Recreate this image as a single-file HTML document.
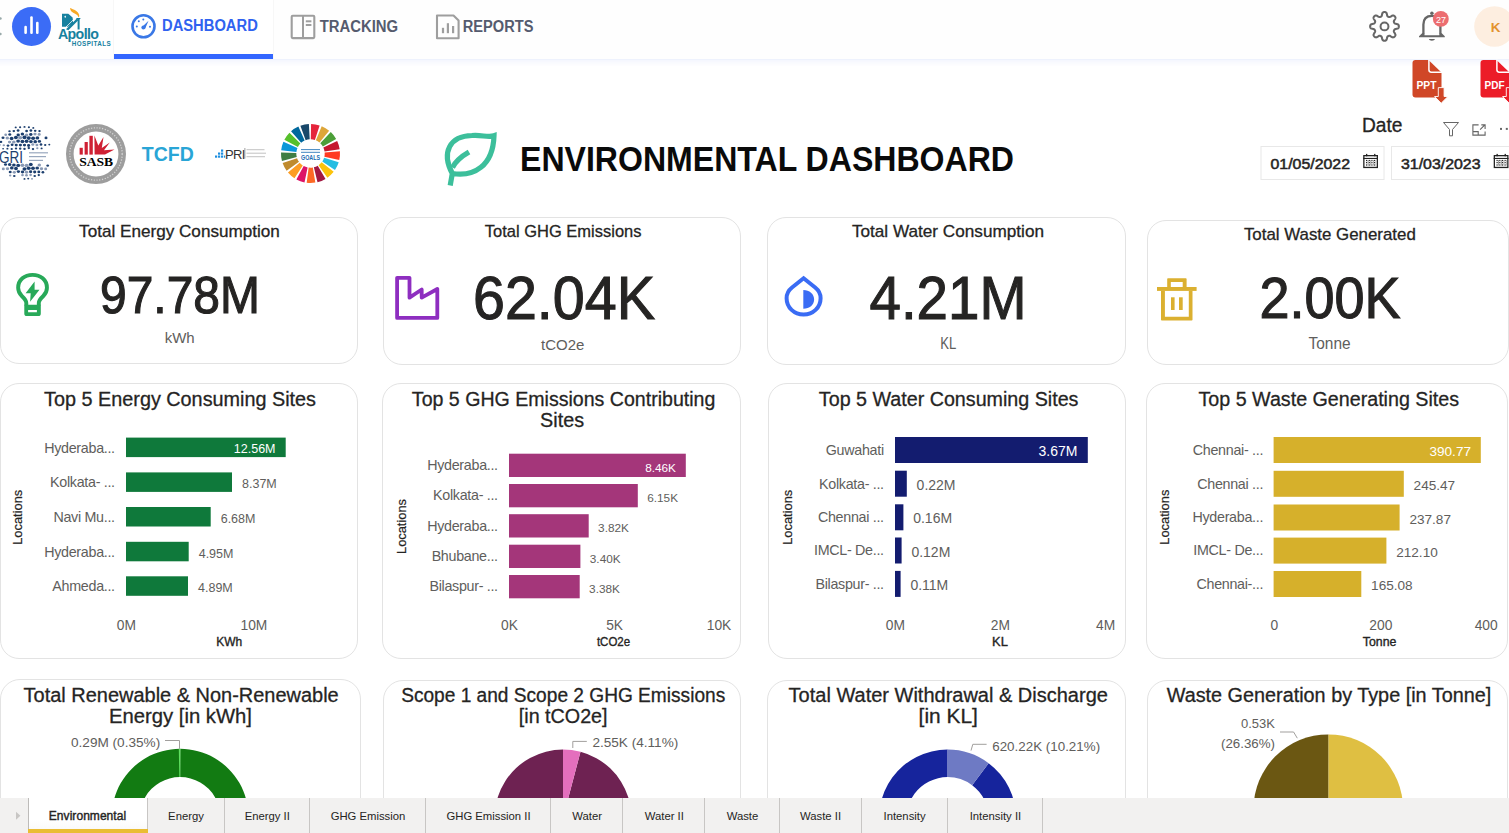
<!DOCTYPE html>
<html><head><meta charset="utf-8">
<style>
*{box-sizing:border-box;margin:0;padding:0}
html,body{width:1509px;height:833px;overflow:hidden;background:#fff;font-family:"Liberation Sans",sans-serif;position:relative}
.a{position:absolute}
.nw{white-space:nowrap}
.card{position:absolute;border:1px solid #e3e3e3;border-radius:19px;background:#fff}
.ttl{position:absolute;white-space:nowrap;color:#252423;font-size:15.5px;letter-spacing:0.8px;text-align:center}
.ctitle{position:absolute;white-space:nowrap;color:#252423;font-size:19px;letter-spacing:0.6px;text-align:center;line-height:21px}
.big{position:absolute;white-space:nowrap;color:#252423;font-size:52px;letter-spacing:0px;line-height:52px}
.unit{position:absolute;white-space:nowrap;color:#605e5c;font-size:15px}
.lbl{position:absolute;white-space:nowrap;color:#605e5c;font-size:13px;text-align:right}
.val{position:absolute;white-space:nowrap;color:#605e5c;font-size:13px}
.bar{position:absolute}
.tick{position:absolute;white-space:nowrap;color:#605e5c;font-size:13px}
.axt{position:absolute;white-space:nowrap;color:#252423;font-size:12px;font-weight:700}
.loc{position:absolute;white-space:nowrap;color:#252423;font-size:12.5px;font-weight:700;transform:rotate(-90deg);transform-origin:center center;letter-spacing:0.3px}
.tab{position:absolute;top:797px;height:36px;border-right:1px solid #c8c6c4;font-size:12px;color:#252423;text-align:center;line-height:38px;white-space:nowrap}
</style></head>
<body>
<!-- HEADER -->
<div class="a" style="left:0;top:0;width:1509px;height:59px;background:#fefefe"></div>
<div class="a" style="left:0;top:59px;width:1509px;height:1px;background:#eef2fd"></div><div class="a" style="left:0;top:60px;width:1509px;height:1px;background:#f5f7fe"></div><div class="a" style="left:0;top:61px;width:1509px;height:1px;background:#f7f8fe"></div><div class="a" style="left:0;top:62px;width:1509px;height:1px;background:#f9fafe"></div><div class="a" style="left:0;top:63px;width:1509px;height:1px;background:#fafbfe"></div><div class="a" style="left:0;top:64px;width:1509px;height:1px;background:#fcfcfe"></div><div class="a" style="left:0;top:65px;width:1509px;height:1px;background:#fdfdff"></div>
<div class="a" style="left:113px;top:0;width:161px;height:59px;background:#fff;border-left:1px solid #f7f7f7;border-right:1px solid #f7f7f7"></div>
<div class="a" style="left:114px;top:54px;width:159px;height:5px;background:#3366ff"></div>


<svg class="a" style="left:0;top:0" width="1509" height="110" viewBox="0 0 1509 110">
  <!-- left tiny dots -->
  <circle cx="0.5" cy="18.5" r="1.2" fill="#9aa"/>
  <circle cx="0.5" cy="34" r="1.2" fill="#9aa"/>
  <circle cx="31.5" cy="26.5" r="19.5" fill="#3b6cf6"/>
  <rect x="24.3" y="25.8" width="2.6" height="8.2" rx="1.2" fill="#fff"/>
  <rect x="30.2" y="16.3" width="2.6" height="17.7" rx="1.2" fill="#fff"/>
  <rect x="36" y="21.8" width="2.6" height="12.2" rx="1.2" fill="#fff"/>
  <!-- apollo logo -->
  <path d="M62 13.8 L68.3 13.8 L72.6 17.6 L73.2 23.2 L68 26.8 L62 26.8 Z" fill="#17819f"/>
  <path d="M64.3 16.8 L65.2 15.6 L66.1 16.8 L65.2 18 Z" fill="#fff"/>
  <path d="M66 29.2 L76.8 18.6 L78.6 20 L68.3 30.2 Z" fill="#17819f"/>
  <path d="M65 28 L73.6 19.5" stroke="#fff" stroke-width="0.8"/>
  <path d="M75.9 18 L80.8 18 L79.6 19.6 L79.6 29.6 L77.6 29.6 L77.6 19.6 Z" fill="#17819f"/>
  <path d="M70 8 C73.5 9.5 78.5 11 79.2 15.2 C79.5 16.5 78.8 17.2 78.3 17.3 C78.4 14.5 74 13.8 71.5 11.5 C70.6 10.6 70.2 9.2 70 8 Z" fill="#f7a823"/>
  <text x="58" y="38.7" font-family="Liberation Sans" font-size="14.2" font-weight="700" fill="#17819f" letter-spacing="-0.65">Apollo</text>
  <text x="71.8" y="45.9" font-family="Liberation Sans" font-size="6.3" font-weight="700" fill="#17819f" letter-spacing="0.42">HOSPITALS</text>
  <!-- gauge icon -->
  <circle cx="143.5" cy="26.3" r="11" fill="none" stroke="#3a78e6" stroke-width="2.6"/>
  <path d="M141.6 27.6 L148.5 20.8 L145 29 Z" fill="#3a78e6"/>
  <circle cx="143.3" cy="27.5" r="1.9" fill="#3a78e6"/>
  <circle cx="136.8" cy="26.5" r="1" fill="#3a78e6"/>
  <circle cx="138.8" cy="21.3" r="1" fill="#3a78e6"/>
  <circle cx="143.3" cy="19.4" r="1" fill="#3a78e6"/>
  <circle cx="150" cy="26.8" r="1" fill="#3a78e6"/>
  <!-- tracking icon -->
  <rect x="291.7" y="15.8" width="22.6" height="22.3" rx="1" fill="none" stroke="#9e9e9e" stroke-width="2.1"/>
  <line x1="303" y1="15.8" x2="303" y2="38" stroke="#9e9e9e" stroke-width="2"/>
  <rect x="305.8" y="20.3" width="5.6" height="2" fill="#9e9e9e"/>
  <rect x="305.8" y="24" width="5.6" height="2" fill="#9e9e9e"/>
  <!-- reports icon -->
  <path d="M437 15.5 L453.5 15.5 L458.6 20.6 L458.6 38.3 L437 38.3 Z" fill="none" stroke="#9e9e9e" stroke-width="2.1" stroke-linejoin="round"/>
  <rect x="441.9" y="27.8" width="2.2" height="5.4" fill="#9e9e9e"/>
  <rect x="446.8" y="23.2" width="2.2" height="10" fill="#9e9e9e"/>
  <rect x="452" y="26" width="2.2" height="7.2" fill="#9e9e9e"/>
  <!-- gear -->
  <path d="M1384.50 12.05 L1384.73 12.06 L1384.95 12.07 L1385.17 12.11 L1385.40 12.16 L1385.62 12.23 L1385.83 12.33 L1386.04 12.46 L1386.24 12.65 L1386.42 12.90 L1386.59 13.22 L1386.73 13.61 L1386.85 14.06 L1386.96 14.52 L1387.06 14.96 L1387.15 15.36 L1387.25 15.68 L1387.36 15.94 L1387.48 16.14 L1387.61 16.30 L1387.74 16.43 L1387.88 16.53 L1388.02 16.62 L1388.16 16.70 L1388.31 16.77 L1388.46 16.84 L1388.61 16.90 L1388.77 16.95 L1388.92 17.00 L1389.09 17.04 L1389.26 17.06 L1389.44 17.06 L1389.64 17.04 L1389.87 16.98 L1390.13 16.88 L1390.43 16.72 L1390.78 16.51 L1391.16 16.26 L1391.56 16.01 L1391.96 15.78 L1392.34 15.61 L1392.69 15.50 L1392.99 15.45 L1393.27 15.46 L1393.51 15.51 L1393.73 15.59 L1393.94 15.69 L1394.13 15.82 L1394.31 15.95 L1394.48 16.10 L1394.65 16.25 L1394.80 16.42 L1394.95 16.59 L1395.08 16.77 L1395.21 16.96 L1395.31 17.17 L1395.39 17.39 L1395.44 17.63 L1395.45 17.91 L1395.40 18.21 L1395.29 18.56 L1395.12 18.94 L1394.89 19.34 L1394.64 19.74 L1394.39 20.12 L1394.18 20.47 L1394.02 20.77 L1393.92 21.03 L1393.86 21.26 L1393.84 21.46 L1393.84 21.64 L1393.86 21.81 L1393.90 21.98 L1393.95 22.13 L1394.00 22.29 L1394.06 22.44 L1394.13 22.59 L1394.20 22.74 L1394.28 22.88 L1394.37 23.02 L1394.47 23.16 L1394.60 23.29 L1394.76 23.42 L1394.96 23.54 L1395.22 23.65 L1395.54 23.75 L1395.94 23.84 L1396.38 23.94 L1396.84 24.05 L1397.29 24.17 L1397.68 24.31 L1398.00 24.48 L1398.25 24.66 L1398.44 24.86 L1398.57 25.07 L1398.67 25.28 L1398.74 25.50 L1398.79 25.73 L1398.83 25.95 L1398.84 26.17 L1398.85 26.40 L1398.84 26.63 L1398.83 26.85 L1398.79 27.07 L1398.74 27.30 L1398.67 27.52 L1398.57 27.73 L1398.44 27.94 L1398.25 28.14 L1398.00 28.32 L1397.68 28.49 L1397.29 28.63 L1396.84 28.75 L1396.38 28.86 L1395.94 28.96 L1395.54 29.05 L1395.22 29.15 L1394.96 29.26 L1394.76 29.38 L1394.60 29.51 L1394.47 29.64 L1394.37 29.78 L1394.28 29.92 L1394.20 30.06 L1394.13 30.21 L1394.06 30.36 L1394.00 30.51 L1393.95 30.67 L1393.90 30.82 L1393.86 30.99 L1393.84 31.16 L1393.84 31.34 L1393.86 31.54 L1393.92 31.77 L1394.02 32.03 L1394.18 32.33 L1394.39 32.68 L1394.64 33.06 L1394.89 33.46 L1395.12 33.86 L1395.29 34.24 L1395.40 34.59 L1395.45 34.89 L1395.44 35.17 L1395.39 35.41 L1395.31 35.63 L1395.21 35.84 L1395.08 36.03 L1394.95 36.21 L1394.80 36.38 L1394.65 36.55 L1394.48 36.70 L1394.31 36.85 L1394.13 36.98 L1393.94 37.11 L1393.73 37.21 L1393.51 37.29 L1393.27 37.34 L1392.99 37.35 L1392.69 37.30 L1392.34 37.19 L1391.96 37.02 L1391.56 36.79 L1391.16 36.54 L1390.78 36.29 L1390.43 36.08 L1390.13 35.92 L1389.87 35.82 L1389.64 35.76 L1389.44 35.74 L1389.26 35.74 L1389.09 35.76 L1388.92 35.80 L1388.77 35.85 L1388.61 35.90 L1388.46 35.96 L1388.31 36.03 L1388.16 36.10 L1388.02 36.18 L1387.88 36.27 L1387.74 36.37 L1387.61 36.50 L1387.48 36.66 L1387.36 36.86 L1387.25 37.12 L1387.15 37.44 L1387.06 37.84 L1386.96 38.28 L1386.85 38.74 L1386.73 39.19 L1386.59 39.58 L1386.42 39.90 L1386.24 40.15 L1386.04 40.34 L1385.83 40.47 L1385.62 40.57 L1385.40 40.64 L1385.17 40.69 L1384.95 40.73 L1384.73 40.74 L1384.50 40.75 L1384.27 40.74 L1384.05 40.73 L1383.83 40.69 L1383.60 40.64 L1383.38 40.57 L1383.17 40.47 L1382.96 40.34 L1382.76 40.15 L1382.58 39.90 L1382.41 39.58 L1382.27 39.19 L1382.15 38.74 L1382.04 38.28 L1381.94 37.84 L1381.85 37.44 L1381.75 37.12 L1381.64 36.86 L1381.52 36.66 L1381.39 36.50 L1381.26 36.37 L1381.12 36.27 L1380.98 36.18 L1380.84 36.10 L1380.69 36.03 L1380.54 35.96 L1380.39 35.90 L1380.23 35.85 L1380.08 35.80 L1379.91 35.76 L1379.74 35.74 L1379.56 35.74 L1379.36 35.76 L1379.13 35.82 L1378.87 35.92 L1378.57 36.08 L1378.22 36.29 L1377.84 36.54 L1377.44 36.79 L1377.04 37.02 L1376.66 37.19 L1376.31 37.30 L1376.01 37.35 L1375.73 37.34 L1375.49 37.29 L1375.27 37.21 L1375.06 37.11 L1374.87 36.98 L1374.69 36.85 L1374.52 36.70 L1374.35 36.55 L1374.20 36.38 L1374.05 36.21 L1373.92 36.03 L1373.79 35.84 L1373.69 35.63 L1373.61 35.41 L1373.56 35.17 L1373.55 34.89 L1373.60 34.59 L1373.71 34.24 L1373.88 33.86 L1374.11 33.46 L1374.36 33.06 L1374.61 32.68 L1374.82 32.33 L1374.98 32.03 L1375.08 31.77 L1375.14 31.54 L1375.16 31.34 L1375.16 31.16 L1375.14 30.99 L1375.10 30.82 L1375.05 30.67 L1375.00 30.51 L1374.94 30.36 L1374.87 30.21 L1374.80 30.06 L1374.72 29.92 L1374.63 29.78 L1374.53 29.64 L1374.40 29.51 L1374.24 29.38 L1374.04 29.26 L1373.78 29.15 L1373.46 29.05 L1373.06 28.96 L1372.62 28.86 L1372.16 28.75 L1371.71 28.63 L1371.32 28.49 L1371.00 28.32 L1370.75 28.14 L1370.56 27.94 L1370.43 27.73 L1370.33 27.52 L1370.26 27.30 L1370.21 27.07 L1370.17 26.85 L1370.16 26.63 L1370.15 26.40 L1370.16 26.17 L1370.17 25.95 L1370.21 25.73 L1370.26 25.50 L1370.33 25.28 L1370.43 25.07 L1370.56 24.86 L1370.75 24.66 L1371.00 24.48 L1371.32 24.31 L1371.71 24.17 L1372.16 24.05 L1372.62 23.94 L1373.06 23.84 L1373.46 23.75 L1373.78 23.65 L1374.04 23.54 L1374.24 23.42 L1374.40 23.29 L1374.53 23.16 L1374.63 23.02 L1374.72 22.88 L1374.80 22.74 L1374.87 22.59 L1374.94 22.44 L1375.00 22.29 L1375.05 22.13 L1375.10 21.98 L1375.14 21.81 L1375.16 21.64 L1375.16 21.46 L1375.14 21.26 L1375.08 21.03 L1374.98 20.77 L1374.82 20.47 L1374.61 20.12 L1374.36 19.74 L1374.11 19.34 L1373.88 18.94 L1373.71 18.56 L1373.60 18.21 L1373.55 17.91 L1373.56 17.63 L1373.61 17.39 L1373.69 17.17 L1373.79 16.96 L1373.92 16.77 L1374.05 16.59 L1374.20 16.42 L1374.35 16.25 L1374.52 16.10 L1374.69 15.95 L1374.87 15.82 L1375.06 15.69 L1375.27 15.59 L1375.49 15.51 L1375.73 15.46 L1376.01 15.45 L1376.31 15.50 L1376.66 15.61 L1377.04 15.78 L1377.44 16.01 L1377.84 16.26 L1378.22 16.51 L1378.57 16.72 L1378.87 16.88 L1379.13 16.98 L1379.36 17.04 L1379.56 17.06 L1379.74 17.06 L1379.91 17.04 L1380.08 17.00 L1380.23 16.95 L1380.39 16.90 L1380.54 16.84 L1380.69 16.77 L1380.84 16.70 L1380.98 16.62 L1381.12 16.53 L1381.26 16.43 L1381.39 16.30 L1381.52 16.14 L1381.64 15.94 L1381.75 15.68 L1381.85 15.36 L1381.94 14.96 L1382.04 14.52 L1382.15 14.06 L1382.27 13.61 L1382.41 13.22 L1382.58 12.90 L1382.76 12.65 L1382.96 12.46 L1383.17 12.33 L1383.38 12.23 L1383.60 12.16 L1383.83 12.11 L1384.05 12.07 L1384.27 12.06 Z" fill="none" stroke="#666" stroke-width="2.05"/>
  <circle cx="1384.5" cy="26.4" r="3.95" fill="none" stroke="#666" stroke-width="2"/>
  <!-- bell -->
  <path d="M1423.4 33.5 L1423.4 24.5 C1423.4 19 1426.5 15.8 1431.9 15.8 C1437.3 15.8 1440.4 19 1440.4 24.5 L1440.4 33.5" fill="none" stroke="#666" stroke-width="2.3"/>
  <path d="M1422.3 33 L1424.5 33 L1424.5 35.2 L1439.3 35.2 L1439.3 33 L1441.5 33 L1444.8 36.2 L1444.8 37.3 L1419 37.3 L1419 36.2 Z" fill="#666"/>
  <circle cx="1431.9" cy="13.2" r="1.75" fill="#666"/>
  <path d="M1428.9 39.1 L1434.9 39.1 C1434.6 41.2 1429.2 41.2 1428.9 39.1 Z" fill="#666"/>
  <circle cx="1440.8" cy="18.9" r="7.95" fill="#ec6d70"/>
  <text x="1441" y="22.6" text-anchor="middle" font-family="Liberation Sans" font-size="9.6" fill="#fff" textLength="10" lengthAdjust="spacingAndGlyphs">27</text>
  <!-- avatar -->
  <circle cx="1494.5" cy="26.5" r="20.3" fill="#fdeee0"/>
  <text x="1495.5" y="32" text-anchor="middle" font-family="Liberation Sans" font-size="13.5" font-weight="700" fill="#e3922f">K</text>
  <!-- PPT -->
  <path d="M1415.5 60 L1428.5 60 L1441.5 72.5 L1441.5 95 Q1441.5 97.5 1439 97.5 L1415.5 97.5 Q1412.5 97.5 1412.5 94.5 L1412.5 63 Q1412.5 60 1415.5 60 Z" fill="#d04727"/>
  <path d="M1428.9 59.5 L1428.9 69.8 Q1428.9 72.2 1431.3 72.2 L1442 72.2" fill="none" stroke="#fff" stroke-width="1.5"/>
  <text x="1426.5" y="89.3" text-anchor="middle" font-family="Liberation Sans" font-size="10.8" font-weight="700" fill="#fff" textLength="20" lengthAdjust="spacingAndGlyphs">PPT</text>
  <path d="M1438.3 87.6 L1444.1 87.6 L1444.1 96.5 L1447.9 96.5 L1441.2 103.2 L1434.6 96.5 L1438.3 96.5 Z" fill="#d04727" stroke="#fff" stroke-width="0.9"/>
  <!-- PDF -->
  <path d="M1483.5 60 L1496.5 60 L1509.5 72.5 L1509.5 97.5 L1483.5 97.5 Q1480.5 97.5 1480.5 94.5 L1480.5 63 Q1480.5 60 1483.5 60 Z" fill="#ec1c28"/>
  <path d="M1496.9 59.5 L1496.9 69.8 Q1496.9 72.2 1499.3 72.2 L1510 72.2" fill="none" stroke="#fff" stroke-width="1.5"/>
  <text x="1494.5" y="89.3" text-anchor="middle" font-family="Liberation Sans" font-size="10.8" font-weight="700" fill="#fff" textLength="20" lengthAdjust="spacingAndGlyphs">PDF</text>
  <path d="M1506.3 87.6 L1512.1 87.6 L1512.1 96.5 L1515.9 96.5 L1509.2 103.2 L1502.6 96.5 L1506.3 96.5 Z" fill="#ec1c28" stroke="#fff" stroke-width="0.9"/>
</svg>
<svg class="a" style="left:0;top:0" width="600" height="50" font-family="Liberation Sans" font-weight="700" font-size="15.8">
  <text x="162" y="31.2" fill="#2f62f0" textLength="95.8" lengthAdjust="spacingAndGlyphs">DASHBOARD</text>
  <text x="319.7" y="31.9" fill="#555b6e" textLength="78.4" lengthAdjust="spacingAndGlyphs">TRACKING</text>
  <text x="462.8" y="31.9" fill="#555b6e" textLength="70.6" lengthAdjust="spacingAndGlyphs">REPORTS</text>
</svg>

<svg class="a" style="left:0;top:110px" width="1509" height="90" viewBox="0 110 1509 90">
  <ellipse cx="15.7" cy="127.4" rx="1.03" ry="0.90" fill="#1d3f6e"/><ellipse cx="20.1" cy="127.3" rx="1.07" ry="0.93" fill="#1d3f6e"/><ellipse cx="24.5" cy="126.9" rx="1.08" ry="0.94" fill="#1d3f6e"/><ellipse cx="28.9" cy="127.2" rx="1.07" ry="0.93" fill="#1d3f6e"/><ellipse cx="33.3" cy="127.9" rx="1.03" ry="0.90" fill="#1d3f6e"/><ellipse cx="9.5" cy="131.2" rx="1.23" ry="1.07" fill="#1d3f6e"/><ellipse cx="13.8" cy="131.1" rx="1.32" ry="1.15" fill="#1d3f6e"/><ellipse cx="18.1" cy="130.5" rx="1.38" ry="1.20" fill="#1d3f6e"/><ellipse cx="26.6" cy="131.0" rx="1.41" ry="1.23" fill="#1d3f6e"/><ellipse cx="30.9" cy="130.5" rx="1.38" ry="1.20" fill="#1d3f6e"/><ellipse cx="35.2" cy="130.8" rx="1.32" ry="1.15" fill="#1d3f6e"/><ellipse cx="39.5" cy="131.1" rx="1.23" ry="1.07" fill="#1d3f6e"/><ellipse cx="5.7" cy="134.7" rx="1.38" ry="1.20" fill="#8a9ab5"/><ellipse cx="9.8" cy="134.5" rx="1.53" ry="1.33" fill="#1d3f6e"/><ellipse cx="18.2" cy="134.9" rx="1.71" ry="1.49" fill="#1d3f6e"/><ellipse cx="22.4" cy="134.0" rx="1.75" ry="1.52" fill="#1d3f6e"/><ellipse cx="26.6" cy="135.0" rx="1.75" ry="1.52" fill="#8a9ab5"/><ellipse cx="30.8" cy="134.6" rx="1.71" ry="1.49" fill="#1d3f6e"/><ellipse cx="35.0" cy="134.1" rx="1.64" ry="1.43" fill="#8a9ab5"/><ellipse cx="39.2" cy="134.4" rx="1.53" ry="1.33" fill="#8a9ab5"/><ellipse cx="3.0" cy="137.8" rx="1.51" ry="1.31" fill="#1d3f6e"/><ellipse cx="7.3" cy="138.1" rx="1.72" ry="1.50" fill="#8a9ab5"/><ellipse cx="11.6" cy="138.5" rx="1.88" ry="1.64" fill="#1d3f6e"/><ellipse cx="15.9" cy="137.5" rx="2.00" ry="1.74" fill="#1d3f6e"/><ellipse cx="20.2" cy="137.7" rx="2.07" ry="1.80" fill="#8a9ab5"/><ellipse cx="24.5" cy="137.4" rx="2.09" ry="1.82" fill="#1d3f6e"/><ellipse cx="28.8" cy="138.1" rx="2.07" ry="1.80" fill="#1d3f6e"/><ellipse cx="33.1" cy="138.3" rx="2.00" ry="1.74" fill="#1d3f6e"/><ellipse cx="37.4" cy="137.9" rx="1.88" ry="1.64" fill="#1d3f6e"/><ellipse cx="46.0" cy="137.9" rx="1.51" ry="1.31" fill="#1d3f6e"/><ellipse cx="1.0" cy="141.9" rx="1.31" ry="1.14" fill="#1d3f6e"/><ellipse cx="9.6" cy="142.1" rx="1.69" ry="1.47" fill="#8a9ab5"/><ellipse cx="13.8" cy="142.0" rx="1.81" ry="1.58" fill="#8a9ab5"/><ellipse cx="18.1" cy="141.1" rx="1.90" ry="1.65" fill="#1d3f6e"/><ellipse cx="22.4" cy="141.5" rx="1.94" ry="1.69" fill="#1d3f6e"/><ellipse cx="26.6" cy="141.2" rx="1.94" ry="1.69" fill="#1d3f6e"/><ellipse cx="30.9" cy="141.6" rx="1.90" ry="1.65" fill="#1d3f6e"/><ellipse cx="35.2" cy="141.7" rx="1.81" ry="1.58" fill="#1d3f6e"/><ellipse cx="39.4" cy="141.4" rx="1.69" ry="1.47" fill="#1d3f6e"/><ellipse cx="-0.3" cy="144.9" rx="1.02" ry="0.89" fill="#8a9ab5"/><ellipse cx="3.8" cy="145.2" rx="1.20" ry="1.04" fill="#8a9ab5"/><ellipse cx="8.0" cy="145.6" rx="1.35" ry="1.17" fill="#1d3f6e"/><ellipse cx="12.1" cy="144.8" rx="1.46" ry="1.27" fill="#1d3f6e"/><ellipse cx="16.2" cy="145.1" rx="1.54" ry="1.34" fill="#1d3f6e"/><ellipse cx="20.4" cy="145.1" rx="1.59" ry="1.39" fill="#1d3f6e"/><ellipse cx="24.5" cy="145.1" rx="1.61" ry="1.40" fill="#1d3f6e"/><ellipse cx="28.6" cy="145.5" rx="1.59" ry="1.39" fill="#1d3f6e"/><ellipse cx="32.8" cy="144.5" rx="1.54" ry="1.34" fill="#8a9ab5"/><ellipse cx="36.9" cy="145.0" rx="1.46" ry="1.27" fill="#8a9ab5"/><ellipse cx="41.0" cy="144.5" rx="1.35" ry="1.17" fill="#1d3f6e"/><ellipse cx="45.2" cy="145.0" rx="1.20" ry="1.04" fill="#1d3f6e"/><ellipse cx="49.3" cy="144.6" rx="1.02" ry="0.89" fill="#1d3f6e"/><ellipse cx="3.1" cy="148.8" rx="0.93" ry="0.81" fill="#1d3f6e"/><ellipse cx="7.4" cy="148.7" rx="1.05" ry="0.92" fill="#1d3f6e"/><ellipse cx="11.7" cy="149.0" rx="1.15" ry="1.00" fill="#1d3f6e"/><ellipse cx="16.0" cy="148.5" rx="1.22" ry="1.06" fill="#1d3f6e"/><ellipse cx="20.2" cy="148.7" rx="1.26" ry="1.10" fill="#1d3f6e"/><ellipse cx="24.5" cy="148.9" rx="1.27" ry="1.11" fill="#1d3f6e"/><ellipse cx="28.8" cy="148.1" rx="1.26" ry="1.10" fill="#1d3f6e"/><ellipse cx="33.0" cy="149.1" rx="1.22" ry="1.06" fill="#1d3f6e"/><ellipse cx="37.3" cy="148.2" rx="1.15" ry="1.00" fill="#8a9ab5"/><ellipse cx="41.6" cy="148.4" rx="1.05" ry="0.92" fill="#1d3f6e"/><ellipse cx="5.5" cy="164.5" rx="1.56" ry="1.36" fill="#1d3f6e"/><ellipse cx="9.7" cy="164.6" rx="1.73" ry="1.51" fill="#1d3f6e"/><ellipse cx="13.9" cy="165.0" rx="1.86" ry="1.62" fill="#1d3f6e"/><ellipse cx="18.2" cy="165.4" rx="1.95" ry="1.69" fill="#1d3f6e"/><ellipse cx="22.4" cy="165.3" rx="1.99" ry="1.73" fill="#8a9ab5"/><ellipse cx="26.6" cy="165.5" rx="1.99" ry="1.73" fill="#8a9ab5"/><ellipse cx="30.8" cy="164.5" rx="1.95" ry="1.69" fill="#1d3f6e"/><ellipse cx="39.3" cy="164.9" rx="1.73" ry="1.51" fill="#8a9ab5"/><ellipse cx="47.7" cy="165.6" rx="1.35" ry="1.18" fill="#1d3f6e"/><ellipse cx="3.3" cy="168.9" rx="1.49" ry="1.30" fill="#8a9ab5"/><ellipse cx="7.5" cy="168.7" rx="1.69" ry="1.47" fill="#8a9ab5"/><ellipse cx="11.8" cy="167.9" rx="1.84" ry="1.60" fill="#1d3f6e"/><ellipse cx="16.0" cy="168.5" rx="1.95" ry="1.70" fill="#1d3f6e"/><ellipse cx="24.5" cy="168.9" rx="2.04" ry="1.77" fill="#1d3f6e"/><ellipse cx="28.7" cy="168.2" rx="2.02" ry="1.76" fill="#1d3f6e"/><ellipse cx="33.0" cy="168.2" rx="1.95" ry="1.70" fill="#1d3f6e"/><ellipse cx="37.2" cy="168.0" rx="1.84" ry="1.60" fill="#1d3f6e"/><ellipse cx="41.5" cy="168.7" rx="1.69" ry="1.47" fill="#8a9ab5"/><ellipse cx="45.7" cy="168.9" rx="1.49" ry="1.30" fill="#8a9ab5"/><ellipse cx="10.2" cy="172.0" rx="1.50" ry="1.30" fill="#1d3f6e"/><ellipse cx="14.3" cy="172.3" rx="1.60" ry="1.39" fill="#8a9ab5"/><ellipse cx="18.4" cy="171.6" rx="1.67" ry="1.45" fill="#1d3f6e"/><ellipse cx="22.5" cy="172.1" rx="1.70" ry="1.48" fill="#1d3f6e"/><ellipse cx="26.5" cy="172.3" rx="1.70" ry="1.48" fill="#8a9ab5"/><ellipse cx="30.6" cy="171.7" rx="1.67" ry="1.45" fill="#1d3f6e"/><ellipse cx="34.7" cy="172.0" rx="1.60" ry="1.39" fill="#1d3f6e"/><ellipse cx="38.8" cy="171.9" rx="1.50" ry="1.30" fill="#1d3f6e"/><ellipse cx="42.9" cy="172.2" rx="1.36" ry="1.19" fill="#1d3f6e"/><ellipse cx="10.2" cy="175.5" rx="1.20" ry="1.05" fill="#8a9ab5"/><ellipse cx="14.3" cy="176.0" rx="1.29" ry="1.12" fill="#1d3f6e"/><ellipse cx="22.5" cy="175.1" rx="1.37" ry="1.19" fill="#8a9ab5"/><ellipse cx="26.5" cy="175.3" rx="1.37" ry="1.19" fill="#8a9ab5"/><ellipse cx="30.6" cy="175.0" rx="1.34" ry="1.16" fill="#8a9ab5"/><ellipse cx="34.7" cy="176.0" rx="1.29" ry="1.12" fill="#1d3f6e"/><ellipse cx="38.8" cy="175.1" rx="1.20" ry="1.05" fill="#1d3f6e"/><ellipse cx="24.5" cy="178.9" rx="1.03" ry="0.90" fill="#1d3f6e"/><ellipse cx="28.2" cy="178.6" rx="1.03" ry="0.89" fill="#1d3f6e"/><ellipse cx="32.0" cy="178.8" rx="1.00" ry="0.87" fill="#8a9ab5"/>
  <text x="-1" y="162.5" font-family="Liberation Sans" font-size="16.5" fill="#1d3f6e" textLength="24" lengthAdjust="spacingAndGlyphs">GRI</text>
  <rect x="29" y="152.2" width="19" height="1.2" fill="#1d3f6e" opacity="0.45"/>
  <rect x="29" y="156" width="17" height="1.2" fill="#1d3f6e" opacity="0.45"/>
  <rect x="29" y="159.8" width="14" height="1.2" fill="#1d3f6e" opacity="0.45"/>
  <!-- SASB -->
  <circle cx="96" cy="154" r="26.2" fill="#fff" stroke="#9d9d9d" stroke-width="7.6"/>
  <circle cx="96" cy="154" r="26.2" fill="none" stroke="#fff" stroke-width="1.3" stroke-dasharray="1.2 1.6" opacity="0.55"/>
  <g fill="#cf2033">
    <rect x="79.6" y="147.8" width="3.2" height="6.8"/>
    <rect x="84.6" y="142" width="3.2" height="12.6"/>
    <rect x="89.4" y="135.8" width="3.4" height="18.8"/>
    <path d="M94.6 154.6 L94.4 135.6 L98.3 145.5 L103.5 137 L101.8 148 L109.8 142.5 L104 150.2 L114.5 149.5 L105 154.6 Z"/>
  </g>
  <text x="96.2" y="165.6" text-anchor="middle" font-family="Liberation Serif" font-size="12.5" font-weight="700" fill="#000" textLength="34" lengthAdjust="spacingAndGlyphs">SASB</text>
  <!-- TCFD -->
  <text x="141.8" y="160.6" font-family="Liberation Sans" font-size="21" font-weight="700" fill="#29a5d6" textLength="52" lengthAdjust="spacingAndGlyphs">TCFD</text>
  <!-- PRI -->
  <g fill="#1e8fe0">
    <rect x="215" y="155.5" width="2.2" height="2.2"/>
    <rect x="218" y="155.5" width="2.2" height="2.2"/><rect x="218" y="152.5" width="2.2" height="2.2"/>
    <rect x="221" y="155.5" width="2.2" height="2.2"/><rect x="221" y="152.5" width="2.2" height="2.2"/><rect x="221" y="149.5" width="2.2" height="2.2"/>
    <rect x="224" y="155.5" width="1.2" height="2.2"/>
  </g>
  <text x="225" y="158.5" font-family="Liberation Sans" font-size="13" fill="#333" letter-spacing="-0.6">PRI</text>
  <rect x="244.5" y="148" width="0.8" height="10.5" fill="#888"/>
  <rect x="246.5" y="149.2" width="18" height="1" fill="#888" opacity="0.5"/>
  <rect x="246.5" y="152.7" width="19.5" height="1" fill="#888" opacity="0.5"/>
  <rect x="246.5" y="156.2" width="18.5" height="1" fill="#888" opacity="0.5"/>
  <!-- SDG -->
  <path d="M310.78 139.30 L311.09 124.01 A29.5 29.5 0 0 1 319.63 125.45 L314.89 140.00 A14.2 14.2 0 0 0 310.78 139.30 Z" fill="#E5243B"/><path d="M315.89 140.36 L321.70 126.21 A29.5 29.5 0 0 1 329.15 130.64 L319.48 142.50 A14.2 14.2 0 0 0 315.89 140.36 Z" fill="#DDA63A"/><path d="M320.27 143.20 L330.81 132.10 A29.5 29.5 0 0 1 336.14 138.92 L322.84 146.48 A14.2 14.2 0 0 0 320.27 143.20 Z" fill="#4C9F38"/><path d="M323.34 147.43 L337.17 140.88 A29.5 29.5 0 0 1 339.68 149.17 L324.55 151.41 A14.2 14.2 0 0 0 323.34 147.43 Z" fill="#C5192D"/><path d="M324.66 152.47 L339.92 151.37 A29.5 29.5 0 0 1 339.27 160.00 L324.35 156.63 A14.2 14.2 0 0 0 324.66 152.47 Z" fill="#FF3A21"/><path d="M324.08 157.66 L338.71 162.14 A29.5 29.5 0 0 1 334.98 169.96 L322.29 161.42 A14.2 14.2 0 0 0 324.08 157.66 Z" fill="#26BDE2"/><path d="M321.66 162.28 L333.68 171.74 A29.5 29.5 0 0 1 327.39 177.69 L318.63 165.14 A14.2 14.2 0 0 0 321.66 162.28 Z" fill="#FCC30B"/><path d="M317.73 165.72 L325.53 178.89 A29.5 29.5 0 0 1 317.51 182.16 L313.87 167.29 A14.2 14.2 0 0 0 317.73 165.72 Z" fill="#A21942"/><path d="M312.83 167.51 L315.34 182.60 A29.5 29.5 0 0 1 306.68 182.75 L308.66 167.58 A14.2 14.2 0 0 0 312.83 167.51 Z" fill="#FD6925"/><path d="M307.61 167.40 L304.50 182.38 A29.5 29.5 0 0 1 296.37 179.40 L303.70 165.97 A14.2 14.2 0 0 0 307.61 167.40 Z" fill="#DD1367"/><path d="M302.78 165.42 L294.47 178.27 A29.5 29.5 0 0 1 287.97 172.54 L299.66 162.67 A14.2 14.2 0 0 0 302.78 165.42 Z" fill="#FD9D24"/><path d="M299.00 161.83 L286.61 170.80 A29.5 29.5 0 0 1 282.61 163.12 L297.08 158.13 A14.2 14.2 0 0 0 299.00 161.83 Z" fill="#BF8B2E"/><path d="M296.77 157.11 L281.97 161.00 A29.5 29.5 0 0 1 281.02 152.40 L296.31 152.97 A14.2 14.2 0 0 0 296.77 157.11 Z" fill="#3F7E44"/><path d="M296.39 151.91 L281.19 150.19 A29.5 29.5 0 0 1 283.41 141.82 L297.46 147.88 A14.2 14.2 0 0 0 296.39 151.91 Z" fill="#0A97D9"/><path d="M297.92 146.92 L284.36 139.83 A29.5 29.5 0 0 1 289.46 132.82 L300.37 143.55 A14.2 14.2 0 0 0 297.92 146.92 Z" fill="#56C02B"/><path d="M301.15 142.82 L291.07 131.31 A29.5 29.5 0 0 1 298.35 126.62 L304.65 140.56 A14.2 14.2 0 0 0 301.15 142.82 Z" fill="#00689D"/><path d="M305.64 140.16 L300.40 125.78 A29.5 29.5 0 0 1 308.88 124.04 L309.72 139.32 A14.2 14.2 0 0 0 305.64 140.16 Z" fill="#19486A"/>
  <rect x="301" y="149" width="19" height="1.1" fill="#1a6db3" opacity="0.75"/>
  <rect x="301" y="151.8" width="19" height="1.1" fill="#1a6db3" opacity="0.75"/>
  <text x="310.5" y="159.6" text-anchor="middle" font-family="Liberation Sans" font-size="6.8" font-weight="700" fill="#1a6db3" textLength="19" lengthAdjust="spacingAndGlyphs">GOALS</text>
  <!-- leaf -->
  <g fill="none" stroke="#3cbf9b" stroke-width="5.2" stroke-linecap="butt" stroke-linejoin="miter" stroke-miterlimit="6">
    <path d="M450.2 185.5 L452.3 173.5 C 474 177, 493 166, 494 135.8 C 488 138, 481 134.4, 472 135.5 C 450 136, 441 152, 452.3 173.5"/>
    <path d="M452.5 167.5 C 456 160.5, 462 156, 469 152"/>
  </g>
  <!-- date slicer icons -->
  <path d="M1443.5 122.5 L1458.5 122.5 L1452.5 129.5 L1452.5 135.8 L1449.5 135.8 L1449.5 129.5 Z" fill="none" stroke="#666" stroke-width="1"/>
  <path d="M1478.6 124.9 L1472.9 124.9 L1472.9 135.1 L1485.1 135.1 L1485.1 131.4 M1481.3 124.9 L1485.1 124.9 L1485.1 128.9 M1472.9 131.6 L1478.2 131.6 L1478.2 135.1 M1480.1 129.7 L1485.1 124.7" fill="none" stroke="#666" stroke-width="1.1"/>
  <rect x="1500" y="127.9" width="2" height="2" fill="#666"/><rect x="1505.8" y="127.9" width="2" height="2" fill="#666"/>
  <!-- date boxes -->
  <rect x="1261" y="146.5" width="123" height="33" fill="#fff" stroke="#e8e8e8" stroke-width="1"/>
  <rect x="1391.5" y="146.5" width="130" height="33" fill="#fff" stroke="#e8e8e8" stroke-width="1"/>
  <rect x="1363.85" y="155.65" width="13.5" height="11.8" fill="none" stroke="#222" stroke-width="1.3"/><rect x="1363.20" y="157.9" width="14.8" height="1.1" fill="#222"/><rect x="1366.00" y="153.9" width="1.3" height="2.4" fill="#222"/><rect x="1374.10" y="153.9" width="1.3" height="2.4" fill="#222"/><rect x="1366.00" y="159.90" width="1.2" height="1.2" fill="#222"/><rect x="1368.70" y="159.90" width="1.2" height="1.2" fill="#222"/><rect x="1371.30" y="159.90" width="1.2" height="1.2" fill="#222"/><rect x="1374.00" y="159.90" width="1.2" height="1.2" fill="#222"/><rect x="1366.00" y="162.00" width="1.2" height="1.2" fill="#222"/><rect x="1368.70" y="162.00" width="1.2" height="1.2" fill="#222"/><rect x="1371.30" y="162.00" width="1.2" height="1.2" fill="#222"/><rect x="1374.00" y="162.00" width="1.2" height="1.2" fill="#222"/><rect x="1366.00" y="164.40" width="1.2" height="1.2" fill="#222"/><rect x="1368.70" y="164.40" width="1.2" height="1.2" fill="#222"/><rect x="1371.30" y="164.40" width="1.2" height="1.2" fill="#222"/><rect x="1374.00" y="164.40" width="1.2" height="1.2" fill="#222"/><rect x="1367.60" y="160" width="1" height="5.6" fill="#999"/><rect x="1370.30" y="160" width="1" height="5.6" fill="#999"/><rect x="1372.90" y="160" width="1" height="5.6" fill="#aaa"/><rect x="1375.50" y="160" width="1" height="5.6" fill="#bbb"/>
  <rect x="1494.35" y="155.65" width="13.5" height="11.8" fill="none" stroke="#222" stroke-width="1.3"/><rect x="1493.70" y="157.9" width="14.8" height="1.1" fill="#222"/><rect x="1496.50" y="153.9" width="1.3" height="2.4" fill="#222"/><rect x="1504.60" y="153.9" width="1.3" height="2.4" fill="#222"/><rect x="1496.50" y="159.90" width="1.2" height="1.2" fill="#222"/><rect x="1499.20" y="159.90" width="1.2" height="1.2" fill="#222"/><rect x="1501.80" y="159.90" width="1.2" height="1.2" fill="#222"/><rect x="1504.50" y="159.90" width="1.2" height="1.2" fill="#222"/><rect x="1496.50" y="162.00" width="1.2" height="1.2" fill="#222"/><rect x="1499.20" y="162.00" width="1.2" height="1.2" fill="#222"/><rect x="1501.80" y="162.00" width="1.2" height="1.2" fill="#222"/><rect x="1504.50" y="162.00" width="1.2" height="1.2" fill="#222"/><rect x="1496.50" y="164.40" width="1.2" height="1.2" fill="#222"/><rect x="1499.20" y="164.40" width="1.2" height="1.2" fill="#222"/><rect x="1501.80" y="164.40" width="1.2" height="1.2" fill="#222"/><rect x="1504.50" y="164.40" width="1.2" height="1.2" fill="#222"/><rect x="1498.10" y="160" width="1" height="5.6" fill="#999"/><rect x="1500.80" y="160" width="1" height="5.6" fill="#999"/><rect x="1503.40" y="160" width="1" height="5.6" fill="#aaa"/><rect x="1506.00" y="160" width="1" height="5.6" fill="#bbb"/>
</svg>
<svg class="a" style="left:500px;top:110px" width="1009" height="80" viewBox="500 110 1009 80" font-family="Liberation Sans">
  <text x="520" y="170.9" font-size="35" font-weight="700" fill="#0a0a0a" textLength="494" lengthAdjust="spacingAndGlyphs">ENVIRONMENTAL DASHBOARD</text>
  <text x="1362" y="132.3" font-size="19.5" fill="#252423" stroke="#252423" stroke-width="0.3" textLength="40.5" lengthAdjust="spacingAndGlyphs">Date</text>
  <text x="1270.5" y="169.2" font-size="14.5" fill="#252423" stroke="#252423" stroke-width="0.5" textLength="79.5" lengthAdjust="spacingAndGlyphs">01/05/2022</text>
  <text x="1401" y="169.2" font-size="14.5" fill="#252423" stroke="#252423" stroke-width="0.5" textLength="79.5" lengthAdjust="spacingAndGlyphs">31/03/2023</text>
</svg>

<!-- KPI CARDS -->
<div class="card" style="left:0px;top:217px;width:358px;height:147px"></div>
<div class="card" style="left:383px;top:217px;width:358px;height:148px"></div>
<div class="card" style="left:767px;top:217px;width:359px;height:148px"></div>
<div class="card" style="left:1147px;top:220px;width:362px;height:145px"></div>
<svg class="a" style="left:0;top:210px" width="1509" height="150" viewBox="0 210 1509 150" font-family="Liberation Sans">
  <g fill="#252423" stroke="#252423" stroke-width="0.35" font-size="16.2" letter-spacing="0.42">
  </g>
  <g fill="#252423" stroke="#252423" stroke-width="1.1">
    <text x="100" y="312.8" font-size="52.3" textLength="160" lengthAdjust="spacingAndGlyphs">97.78M</text>
    <text x="473" y="318.6" font-size="61.5" textLength="182" lengthAdjust="spacingAndGlyphs">62.04K</text>
    <text x="869.5" y="318.5" font-size="61.5" textLength="157" lengthAdjust="spacingAndGlyphs">4.21M</text>
    <text x="1259.5" y="318.4" font-size="57.5" textLength="141" lengthAdjust="spacingAndGlyphs">2.00K</text>
  </g>
  <g fill="#605e5c" font-size="15" text-anchor="middle">
    <text x="179.7" y="342.7">kWh</text>
    <text x="562.8" y="349.6">tCO2e</text>
    <text x="948.2" y="349.1" font-size="16" textLength="16" lengthAdjust="spacingAndGlyphs">KL</text>
    <text x="1329.6" y="349.1" font-size="16" textLength="42" lengthAdjust="spacingAndGlyphs">Tonne</text>
  </g>
  <!-- bulb -->
  <path d="M26.3 305.5 L26.3 303 C26.3 300.3 24.3 298.3 21.8 296 C19.3 293.6 18.15 290.8 18.15 287.8 C18.15 279.6 24.6 274.85 32.55 274.85 C40.5 274.85 46.95 279.6 46.95 287.8 C46.95 290.8 45.8 293.6 43.3 296 C40.8 298.3 38.8 300.3 38.8 303 L38.8 305.5" fill="none" stroke="#28a959" stroke-width="3.9" stroke-linejoin="round"/>
  <path fill-rule="evenodd" d="M24.3 304.8 L40.8 304.8 L40.8 313.5 Q40.8 316.1 38.2 316.1 L26.9 316.1 Q24.3 316.1 24.3 313.5 Z M28.1 309.9 L36.9 309.9 L36.9 312.2 L28.1 312.2 Z" fill="#28a959"/>
  <path d="M34.6 281.6 L25.6 293.3 L30.7 293.3 L30.1 301.7 L39.5 289.7 L34.6 289.7 Z" fill="#28a959"/>
  <!-- factory -->
  <path d="M397.1 277.8 L409.5 277.8 L409.5 297.7 L421.7 289.5 L421.7 297.6 L437.3 289 L437.3 317.9 L397.1 317.9 Z" fill="none" stroke="#8e2ec0" stroke-width="3.8" stroke-linejoin="round"/>
  <!-- drop -->
  <path d="M803.6 278.2 L815.2 287.5 C819 290.5 820.6 294 820.6 298.2 C820.6 307.5 813 314.5 803.6 314.5 C794.2 314.5 786.6 307.5 786.6 298.2 C786.6 294 788.2 290.5 792 287.5 Z" fill="none" stroke="#3a6cf4" stroke-width="4" stroke-linejoin="miter"/>
  <path d="M803.3 290 C809.5 290 814.1 294 814.1 299.4 C814.1 304.7 809.5 308.7 803.3 308.7 Z" fill="#3a6cf4"/>
  <!-- trash -->
  <g fill="#dbb030">
    <rect x="1157" y="287" width="39.6" height="3.9"/>
    <path d="M1167.2 287 L1167.2 279 Q1167.2 278.2 1168 278.2 L1185.8 278.2 Q1186.6 278.2 1186.6 279 L1186.6 287 L1182.7 287 L1182.7 282 L1170.8 282 L1170.8 287 Z"/>
    <path d="M1161 290.8 L1164.9 290.8 L1164.9 316.7 L1188.8 316.7 L1188.8 290.8 L1192.5 290.8 L1192.5 319.8 Q1192.5 320.6 1191.7 320.6 L1161.8 320.6 Q1161 320.6 1161 319.8 Z"/>
    <rect x="1171" y="297.3" width="3.6" height="12.7"/>
    <rect x="1179" y="297.3" width="3.7" height="12.7"/>
  </g>
</svg>



<!-- ROW3 -->
<div class="card" style="left:0px;top:679px;width:361px;height:200px;border-radius:20px"></div>
<div class="card" style="left:383px;top:680px;width:358px;height:200px;border-radius:20px"></div>
<div class="card" style="left:767px;top:680px;width:359px;height:200px;border-radius:20px"></div>
<div class="card" style="left:1147px;top:680px;width:361px;height:200px;border-radius:20px"></div>
<svg class="a" style="left:0;top:670px" width="1509" height="163" viewBox="0 670 1509 163" font-family="Liberation Sans">
<path d="M180.24 748.80 A68.5 68.5 0 1 1 180.00 748.80 L180.00 777.00 A40.3 40.3 0 1 0 180.14 777.00 Z" fill="#127b12"/>
<path d="M178.80 748.81 A68.5 68.5 0 0 1 180.31 748.80 L180.18 777.00 A40.3 40.3 0 0 0 179.30 777.01 Z" fill="#5fe05f"/>
<path d="M563 818 L580.50 751.77 A68.5 68.5 0 1 1 563.00 749.50 Z" fill="#6e2252"/>
<path d="M563 818 L563.00 749.50 A68.5 68.5 0 0 1 580.50 751.77 Z" fill="#e46fbd"/>
<path d="M988.63 763.15 A68.5 68.5 0 1 1 947.60 749.50 L947.60 777.00 A41 41 0 1 0 972.16 785.17 Z" fill="#16249c"/>
<path d="M947.60 749.50 A68.5 68.5 0 0 1 988.63 763.15 L972.16 785.17 A41 41 0 0 0 947.60 777.00 Z" fill="#6e7ac4"/>
<path d="M1328.3 809.2 L1328.30 734.40 A74.8 74.8 0 0 1 1328.30 884.00 Z" fill="#dfbf42"/>
<path d="M1328.3 809.2 L1328.30 884.00 A74.8 74.8 0 0 1 1328.30 734.40 Z" fill="#6b5712"/>
<g fill="#252423" stroke="#252423" stroke-width="0.35" font-size="19" text-anchor="middle">
</g>
<g fill="#605e5c">
  <text x="71" y="746.8" font-size="13.6">0.29M (0.35%)</text>
  <text x="592.4" y="746.5" font-size="13.6">2.55K (4.11%)</text>
  <text x="992.2" y="751" font-size="13.4">620.22K (10.21%)</text>
  <text x="1275" y="728.2" font-size="13" text-anchor="end">0.53K</text>
  <text x="1275" y="748" font-size="13.3" text-anchor="end">(26.36%)</text>
</g>
<g fill="none" stroke="#a19f9d" stroke-width="1">
  <path d="M165 740.5 L179.5 740.5 L179.5 748.8"/>
  <path d="M586.8 741.4 L572.8 741.4 L572.8 748"/>
  <path d="M986.6 744.3 L972.8 744.3 L971 750.6"/>
  <path d="M1280 732 L1293.6 732 L1297.3 738.2"/>
</g>
</svg>
<div class="a" style="left:0;top:797.5px;width:1509px;height:36px;background:#f2f1f0"></div>
<svg class="a" style="left:0;top:797px" width="30" height="36"><path d="M16 14.8 L20.4 18.8 L16 22.8 Z" fill="#c8c6c4"/></svg>
<div class="a" style="left:27.5px;top:797.5px;width:120.0px;height:36px;background:linear-gradient(#fff 60%,#f7f7f7);border-left:1px solid #bdbbb9;border-right:1px solid #c8c6c4"></div>
<div class="a" style="left:27.5px;top:829px;width:120.0px;height:4px;background:#eabd33"></div>
<div class="a nw" style="left:27.5px;top:809px;width:120.0px;text-align:center;font-size:12px;line-height:14px;font-weight:400;-webkit-text-stroke:0.4px #252423;color:#252423;letter-spacing:0.05px">Environmental</div>
<div class="a" style="left:223.5px;top:797.5px;width:1px;height:36px;background:#c8c6c4"></div>
<div class="a nw" style="left:147.5px;top:809px;width:77.0px;text-align:center;font-size:11.3px;line-height:14px;color:#252423">Energy</div>
<div class="a" style="left:309px;top:797.5px;width:1px;height:36px;background:#c8c6c4"></div>
<div class="a nw" style="left:224.5px;top:809px;width:85.5px;text-align:center;font-size:11.3px;line-height:14px;color:#252423">Energy II</div>
<div class="a" style="left:425px;top:797.5px;width:1px;height:36px;background:#c8c6c4"></div>
<div class="a nw" style="left:310px;top:809px;width:116px;text-align:center;font-size:11.3px;line-height:14px;color:#252423">GHG Emission</div>
<div class="a" style="left:550px;top:797.5px;width:1px;height:36px;background:#c8c6c4"></div>
<div class="a nw" style="left:426px;top:809px;width:125px;text-align:center;font-size:11.3px;line-height:14px;color:#252423">GHG Emission II</div>
<div class="a" style="left:622.3px;top:797.5px;width:1px;height:36px;background:#c8c6c4"></div>
<div class="a nw" style="left:551px;top:809px;width:72.29999999999995px;text-align:center;font-size:11.3px;line-height:14px;color:#252423">Water</div>
<div class="a" style="left:704.4px;top:797.5px;width:1px;height:36px;background:#c8c6c4"></div>
<div class="a nw" style="left:623.3px;top:809px;width:82.10000000000002px;text-align:center;font-size:11.3px;line-height:14px;color:#252423">Water II</div>
<div class="a" style="left:778.6px;top:797.5px;width:1px;height:36px;background:#c8c6c4"></div>
<div class="a nw" style="left:705.4px;top:809px;width:74.20000000000005px;text-align:center;font-size:11.3px;line-height:14px;color:#252423">Waste</div>
<div class="a" style="left:860.5px;top:797.5px;width:1px;height:36px;background:#c8c6c4"></div>
<div class="a nw" style="left:779.6px;top:809px;width:81.89999999999998px;text-align:center;font-size:11.3px;line-height:14px;color:#252423">Waste II</div>
<div class="a" style="left:946.6px;top:797.5px;width:1px;height:36px;background:#c8c6c4"></div>
<div class="a nw" style="left:861.5px;top:809px;width:86.10000000000002px;text-align:center;font-size:11.3px;line-height:14px;color:#252423">Intensity</div>
<div class="a" style="left:1042.3px;top:797.5px;width:1px;height:36px;background:#c8c6c4"></div>
<div class="a nw" style="left:947.6px;top:809px;width:95.69999999999993px;text-align:center;font-size:11.3px;line-height:14px;color:#252423">Intensity II</div>
<!-- /ROW3 -->




<!-- BAR CARDS -->
<div class="card" style="left:0px;top:383px;width:358px;height:276px"></div>
<div class="card" style="left:382px;top:383px;width:359px;height:276px"></div>
<div class="card" style="left:768px;top:383px;width:358px;height:276px"></div>
<div class="card" style="left:1146px;top:383px;width:362px;height:276px"></div>
<svg class="a" style="left:0;top:375px" width="1509" height="290" viewBox="0 375 1509 290" font-family="Liberation Sans">
<rect x="126" y="437.6" width="159.7" height="19.5" fill="#0f793b"/>
<text x="114.8" y="452.7" text-anchor="end" fill="#605e5c" font-size="14.3" letter-spacing="-0.3">Hyderaba...</text>
<text x="275.5" y="453.4" text-anchor="end" fill="#fff" font-size="12.5">12.56M</text>
<rect x="126" y="472.4" width="106" height="19.5" fill="#0f793b"/>
<text x="114.8" y="487.4" text-anchor="end" fill="#605e5c" font-size="14.3" letter-spacing="-0.3">Kolkata- ...</text>
<text x="242.0" y="488.1" fill="#605e5c" font-size="12.5">8.37M</text>
<rect x="126" y="507" width="84.7" height="19.5" fill="#0f793b"/>
<text x="114.8" y="522.0" text-anchor="end" fill="#605e5c" font-size="14.3" letter-spacing="-0.3">Navi Mu...</text>
<text x="220.7" y="522.8" fill="#605e5c" font-size="12.5">6.68M</text>
<rect x="126" y="541.8" width="62.7" height="19.5" fill="#0f793b"/>
<text x="114.8" y="556.8" text-anchor="end" fill="#605e5c" font-size="14.3" letter-spacing="-0.3">Hyderaba...</text>
<text x="198.7" y="557.5" fill="#605e5c" font-size="12.5">4.95M</text>
<rect x="126" y="576.3" width="62" height="19.5" fill="#0f793b"/>
<text x="114.8" y="591.3" text-anchor="end" fill="#605e5c" font-size="14.3" letter-spacing="-0.3">Ahmeda...</text>
<text x="198.0" y="592.0" fill="#605e5c" font-size="12.5">4.89M</text>
<text x="126.3" y="630" text-anchor="middle" fill="#605e5c" font-size="13.8">0M</text>
<text x="253.9" y="630" text-anchor="middle" fill="#605e5c" font-size="13.8">10M</text>
<text x="229.3" y="645.7" text-anchor="middle" fill="#252423" stroke="#252423" stroke-width="0.35" font-size="12" textLength="26" lengthAdjust="spacingAndGlyphs">KWh</text>
<text transform="translate(22.3,517.3) rotate(-90)" text-anchor="middle" fill="#252423" stroke="#252423" stroke-width="0.2" font-size="12.8" textLength="55" lengthAdjust="spacingAndGlyphs">Locations</text>
<rect x="509" y="453.7" width="176.8" height="23.3" fill="#a4367a"/>
<text x="497.8" y="470.1" text-anchor="end" fill="#605e5c" font-size="14.3" letter-spacing="-0.3">Hyderaba...</text>
<text x="676" y="471.6" text-anchor="end" fill="#fff" font-size="11.8">8.46K</text>
<rect x="509" y="484" width="128.8" height="23.3" fill="#a4367a"/>
<text x="497.8" y="500.4" text-anchor="end" fill="#605e5c" font-size="14.3" letter-spacing="-0.3">Kolkata- ...</text>
<text x="647.2" y="501.9" fill="#605e5c" font-size="11.8">6.15K</text>
<rect x="509" y="514.2" width="79.7" height="23.3" fill="#a4367a"/>
<text x="497.8" y="530.6" text-anchor="end" fill="#605e5c" font-size="14.3" letter-spacing="-0.3">Hyderaba...</text>
<text x="598.1" y="532.1" fill="#605e5c" font-size="11.8">3.82K</text>
<rect x="509" y="544.7" width="71.4" height="23.3" fill="#a4367a"/>
<text x="497.8" y="561.1" text-anchor="end" fill="#605e5c" font-size="14.3" letter-spacing="-0.3">Bhubane...</text>
<text x="589.8" y="562.6" fill="#605e5c" font-size="11.8">3.40K</text>
<rect x="509" y="575" width="70.7" height="23.3" fill="#a4367a"/>
<text x="497.8" y="591.4" text-anchor="end" fill="#605e5c" font-size="14.3" letter-spacing="-0.3">Bilaspur- ...</text>
<text x="589.1" y="592.9" fill="#605e5c" font-size="11.8">3.38K</text>
<text x="509.5" y="630" text-anchor="middle" fill="#605e5c" font-size="13.8">0K</text>
<text x="614.6" y="630" text-anchor="middle" fill="#605e5c" font-size="13.8">5K</text>
<text x="719" y="630" text-anchor="middle" fill="#605e5c" font-size="13.8">10K</text>
<text x="613.5" y="645.7" text-anchor="middle" fill="#252423" stroke="#252423" stroke-width="0.35" font-size="12" textLength="33.2" lengthAdjust="spacingAndGlyphs">tCO2e</text>
<text transform="translate(405.6,526.5) rotate(-90)" text-anchor="middle" fill="#252423" stroke="#252423" stroke-width="0.2" font-size="12.8" textLength="55" lengthAdjust="spacingAndGlyphs">Locations</text>
<rect x="895" y="437" width="192.8" height="26" fill="#131c6f"/>
<text x="883.8" y="454.8" text-anchor="end" fill="#605e5c" font-size="14.3" letter-spacing="-0.3">Guwahati</text>
<text x="1077.5" y="456.0" text-anchor="end" fill="#fff" font-size="14">3.67M</text>
<rect x="895" y="470.7" width="11.8" height="26" fill="#131c6f"/>
<text x="883.8" y="488.5" text-anchor="end" fill="#605e5c" font-size="14.3" letter-spacing="-0.3">Kolkata- ...</text>
<text x="916.6" y="489.7" fill="#605e5c" font-size="14">0.22M</text>
<rect x="895" y="504.3" width="8.4" height="26" fill="#131c6f"/>
<text x="883.8" y="522.1" text-anchor="end" fill="#605e5c" font-size="14.3" letter-spacing="-0.3">Chennai ...</text>
<text x="913.2" y="523.3" fill="#605e5c" font-size="14">0.16M</text>
<rect x="895" y="537.5" width="6.6" height="26" fill="#131c6f"/>
<text x="883.8" y="555.3" text-anchor="end" fill="#605e5c" font-size="14.3" letter-spacing="-0.3">IMCL- De...</text>
<text x="911.4" y="556.5" fill="#605e5c" font-size="14">0.12M</text>
<rect x="895" y="570.9" width="5.6" height="26" fill="#131c6f"/>
<text x="883.8" y="588.7" text-anchor="end" fill="#605e5c" font-size="14.3" letter-spacing="-0.3">Bilaspur- ...</text>
<text x="910.4" y="589.9" fill="#605e5c" font-size="14">0.11M</text>
<text x="895.3" y="630" text-anchor="middle" fill="#605e5c" font-size="13.8">0M</text>
<text x="1000.4" y="630" text-anchor="middle" fill="#605e5c" font-size="13.8">2M</text>
<text x="1105.7" y="630" text-anchor="middle" fill="#605e5c" font-size="13.8">4M</text>
<text x="1000" y="645.7" text-anchor="middle" fill="#252423" stroke="#252423" stroke-width="0.35" font-size="12" textLength="15.8" lengthAdjust="spacingAndGlyphs">KL</text>
<text transform="translate(791.6,517.3) rotate(-90)" text-anchor="middle" fill="#252423" stroke="#252423" stroke-width="0.2" font-size="12.8" textLength="55" lengthAdjust="spacingAndGlyphs">Locations</text>
<rect x="1273.6" y="437" width="207.2" height="26" fill="#d6b02b"/>
<text x="1263.1" y="454.8" text-anchor="end" fill="#605e5c" font-size="14.3" letter-spacing="-0.3">Chennai- ...</text>
<text x="1471" y="456.0" text-anchor="end" fill="#fff" font-size="13.6">390.77</text>
<rect x="1273.6" y="470.8" width="130.2" height="26" fill="#d6b02b"/>
<text x="1263.1" y="488.6" text-anchor="end" fill="#605e5c" font-size="14.3" letter-spacing="-0.3">Chennai ...</text>
<text x="1413.6" y="489.8" fill="#605e5c" font-size="13.6">245.47</text>
<rect x="1273.6" y="504.5" width="126" height="26" fill="#d6b02b"/>
<text x="1263.1" y="522.3" text-anchor="end" fill="#605e5c" font-size="14.3" letter-spacing="-0.3">Hyderaba...</text>
<text x="1409.4" y="523.5" fill="#605e5c" font-size="13.6">237.87</text>
<rect x="1273.6" y="537.6" width="112.8" height="26" fill="#d6b02b"/>
<text x="1263.1" y="555.4" text-anchor="end" fill="#605e5c" font-size="14.3" letter-spacing="-0.3">IMCL- De...</text>
<text x="1396.2" y="556.6" fill="#605e5c" font-size="13.6">212.10</text>
<rect x="1273.6" y="571" width="87.7" height="26" fill="#d6b02b"/>
<text x="1263.1" y="588.8" text-anchor="end" fill="#605e5c" font-size="14.3" letter-spacing="-0.3">Chennai-...</text>
<text x="1371.1" y="590.0" fill="#605e5c" font-size="13.6">165.08</text>
<text x="1274.3" y="630" text-anchor="middle" fill="#605e5c" font-size="13.8">0</text>
<text x="1380.8" y="630" text-anchor="middle" fill="#605e5c" font-size="13.8">200</text>
<text x="1486.2" y="630" text-anchor="middle" fill="#605e5c" font-size="13.8">400</text>
<text x="1379.6" y="645.7" text-anchor="middle" fill="#252423" stroke="#252423" stroke-width="0.35" font-size="12" textLength="33.6" lengthAdjust="spacingAndGlyphs">Tonne</text>
<text transform="translate(1169.1,517.2) rotate(-90)" text-anchor="middle" fill="#252423" stroke="#252423" stroke-width="0.2" font-size="12.8" textLength="55" lengthAdjust="spacingAndGlyphs">Locations</text>
</svg>
<!-- /BARS -->
<!-- TITLES -->
<svg class="a" style="left:0;top:0" width="1509" height="833" font-family="Liberation Sans">
<g fill="#252423" stroke="#252423" stroke-width="0.28">
<text x="79.11" y="237" font-size="16.2" textLength="200.74" lengthAdjust="spacingAndGlyphs">Total Energy Consumption</text>
<text x="484.85" y="237.1" font-size="16.2" textLength="156.63" lengthAdjust="spacingAndGlyphs">Total GHG Emissions</text>
<text x="851.90" y="237.3" font-size="16.2" textLength="192.11" lengthAdjust="spacingAndGlyphs">Total Water Consumption</text>
<text x="1243.90" y="240.2" font-size="16.2" textLength="171.95" lengthAdjust="spacingAndGlyphs">Total Waste Generated</text>
<text x="44.11" y="405.9" font-size="19.5" textLength="271.90" lengthAdjust="spacingAndGlyphs">Top 5 Energy Consuming Sites</text>
<text x="411.85" y="405.8" font-size="19.5" textLength="303.53" lengthAdjust="spacingAndGlyphs">Top 5 GHG Emissions Contributing</text>
<text x="540.11" y="426.7" font-size="19.5" textLength="43.95" lengthAdjust="spacingAndGlyphs">Sites</text>
<text x="818.85" y="406.1" font-size="19.5" textLength="259.63" lengthAdjust="spacingAndGlyphs">Top 5 Water Consuming Sites</text>
<text x="1198.48" y="406" font-size="19.5" textLength="260.58" lengthAdjust="spacingAndGlyphs">Top 5 Waste Generating Sites</text>
<text x="23.64" y="702" font-size="19.5" textLength="315.05" lengthAdjust="spacingAndGlyphs">Total Renewable &amp; Non-Renewable</text>
<text x="109.00" y="723" font-size="19.5" textLength="143.01" lengthAdjust="spacingAndGlyphs">Energy [in kWh]</text>
<text x="401.16" y="701.9" font-size="19.5" textLength="324.06" lengthAdjust="spacingAndGlyphs">Scope 1 and Scope 2 GHG Emissions</text>
<text x="518.79" y="723" font-size="19.5" textLength="88.80" lengthAdjust="spacingAndGlyphs">[in tCO2e]</text>
<text x="788.64" y="702" font-size="19.5" textLength="319.26" lengthAdjust="spacingAndGlyphs">Total Water Withdrawal &amp; Discharge</text>
<text x="918.63" y="722.9" font-size="19.5" textLength="59.17" lengthAdjust="spacingAndGlyphs">[in KL]</text>
<text x="1166.69" y="701.7" font-size="19.5" textLength="324.53" lengthAdjust="spacingAndGlyphs">Waste Generation by Type [in Tonne]</text>
</g></svg>
<!-- /TITLES -->
</body></html>
